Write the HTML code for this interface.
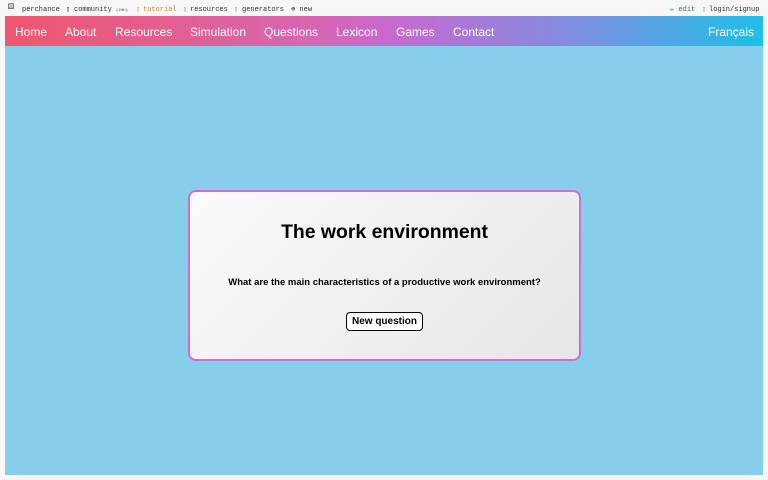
<!DOCTYPE html>
<html><head><meta charset="utf-8"><style>
*{margin:0;padding:0;box-sizing:border-box}
body{width:768px;height:480px;background:#f7f7f7;font-family:"Liberation Sans",sans-serif;position:relative;overflow:hidden}
.top{position:absolute;top:0;left:0;right:0;height:16px;font-family:"Liberation Mono",monospace;font-size:7px;color:#333;line-height:17px}
.top span{position:absolute;top:2px;white-space:nowrap}
.frame{position:absolute;left:5px;top:16px;width:758px;height:459px;background:#87ceeb}
.nav{position:absolute;left:0;top:0;width:758px;height:30px;background:linear-gradient(90deg,#f0566e 0%,#d865b0 40%,#c66ad0 52%,#7f8ee0 75%,#1fbfe8 100%)}
.nav a{position:absolute;top:0;line-height:32px;color:#fff;font-size:12px;text-decoration:none}
.card{position:absolute;left:183px;top:174px;width:393px;height:171px;border:2px solid #c96fd6;border-radius:8px;background:linear-gradient(135deg,#fafafa,#e6e6e6);text-align:center}
h1{font-size:19.4px;position:absolute;top:29px;left:0;right:0}
p{font-size:9.5px;font-weight:bold;position:absolute;top:85px;left:0;right:0}
.btn{position:absolute;left:156px;top:120px;width:77px;height:19px;border:1.5px solid #000;border-radius:4px;background:#fff;font-size:10px;font-weight:bold;line-height:17px}
</style></head><body>
<div class="top">
<span style="left:8px;font-size:10px;line-height:15px;top:0">⚄</span><span style="left:22px">perchance</span>
<span style="left:66px">▯</span><span style="left:74px">community <small style="font-size:4px">(24h)</small></span>
<span style="left:136px;color:#e0a060">▯</span><span style="left:143px;color:#d9822b">tutorial</span>
<span style="left:183px;color:#999">▯</span><span style="left:190px">resources</span>
<span style="left:234px;color:#999">▯</span><span style="left:242px">generators</span>
<span style="left:291px">⊕ new</span>
<span style="left:670px;color:#2a8a2a">✏ edit</span>
<span style="left:702px;color:#999">▯</span><span style="left:709px">login/signup</span>
</div>
<div class="frame">
<div class="nav">
<a style="left:10px">Home</a><a style="left:60px">About</a><a style="left:110px">Resources</a><a style="left:185px">Simulation</a><a style="left:259px">Questions</a><a style="left:331px">Lexicon</a><a style="left:391px">Games</a><a style="left:448px">Contact</a><a style="left:703px">Français</a>
</div>
<div class="card">
<h1>The work environment</h1>
<p>What are the main characteristics of a productive work environment?</p>
<div class="btn">New question</div>
</div>
</div>
</body></html>
